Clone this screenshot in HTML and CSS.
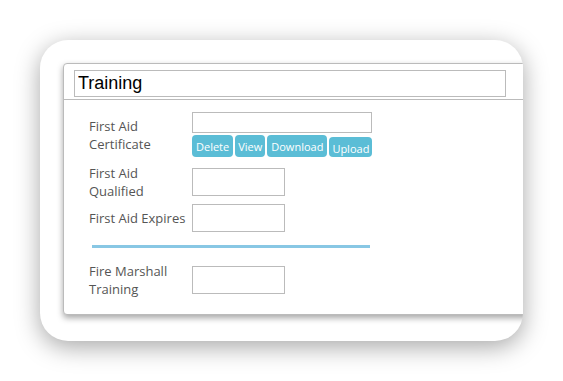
FILE: index.html
```html
<html>

<head>
    <link rel="stylesheet" href="styles.css">
</head>

<body>
    <main class="card">
        <!-- Training panel -->
        <section class="panel">
            <div class="panel-header">
                <input class="title-input" value="Training" />
            </div>
            <div class="panel-body">
                <div class="row row-first">
                    <label class="row-label">First Aid Certificate</label>
                    <div class="file-field">
                        <input class="form-input wide" />
                        <div class="file-buttons">
                            <button class="btn">Delete</button>
                            <button class="btn btn-small">View</button>
                            <button class="btn">Download</button>
                            <button class="btn btn-upload">Upload</button>
                        </div>
                    </div>
                </div>
                <div class="row">
                    <label class="row-label">First Aid Qualified</label>
                    <input class="form-input" />
                </div>
                <div class="row">
                    <label class="row-label">First Aid Expires</label>
                    <input class="form-input" />
                </div>

                <hr class="divider" />

                <div class="row">
                    <label class="row-label">Fire Marshall Training</label>
                    <input class="form-input" />
                </div>
            </div>
        </section>
    </main>
</body>

</html>
```

FILE: styles.css
```css
* {
    margin: 0;
    padding: 0;
    box-sizing: border-box;
}

body {
    background: #ffffff;
    padding: 40px;
    font-family: "Open Sans", sans-serif;
}

.card {
    width: 483px;
    height: 301px;
    background: #ffffff;
    border-radius: 28px;
    box-shadow: 0 6px 24px rgba(0, 0, 0, 0.35);
    padding: 23px 0 0 23px;
    overflow: hidden;
}

.panel {
    width: 500px;
    height: 252px;
    border: 1px solid #bbbbbb;
    border-radius: 4px;
    box-shadow: 0 3px 6px rgba(0, 0, 0, 0.35);
    background: #ffffff;
}

.panel-header {
    padding: 6px 10px 2px;
    border-bottom: 1px solid #bbbbbb;
}

.title-input {
    display: block;
    width: 432px;
    height: 27px;
    border: 1px solid #bbbbbb;
    padding-left: 3px;
    font-family: "Liberation Sans", Arial, sans-serif;
    font-size: 18px;
    color: #000000;
    outline: none;
}

.panel-body {
    padding: 12px 0 0 25px;
}

.row {
    display: flex;
    align-items: center;
    margin-bottom: 4px;
}

.row-first {
    margin-bottom: 7px;
}

.row-label {
    width: 103px;
    padding-right: 2px;
    font-size: 13px;
    line-height: 18px;
    color: #555555;
}

.form-input {
    width: 93px;
    height: 28px;
    border: 1px solid #bbbbbb;
    outline: none;
}

.form-input.wide {
    display: block;
    width: 180px;
    height: 21px;
}

.file-buttons {
    display: flex;
    align-items: flex-end;
    gap: 2px;
    margin-top: 2px;
}

.btn {
    height: 22px;
    padding: 0 4px;
    border: none;
    border-radius: 4px;
    background: #5bbdd6;
    color: #ffffff;
    font-family: "Open Sans", sans-serif;
    font-size: 11px;
}

.btn-small {
    padding: 0 3px;
}

.btn-upload {
    height: 20px;
    padding: 2px 3px 0;
}

.divider {
    width: 278px;
    margin: 13px 0 14px 3px;
    border: none;
    border-top: 3px solid #88c7e4;
}
```
